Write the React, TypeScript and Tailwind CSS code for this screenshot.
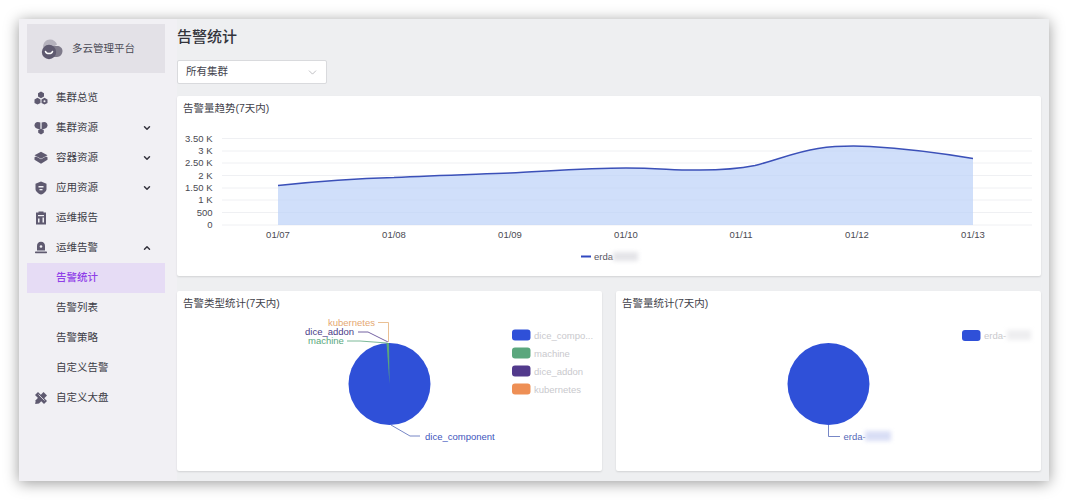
import { ChevronDown, ChevronUp } from 'lucide-react'
import type { ReactNode } from 'react'

const FONT = 'font-["Liberation_Sans","Noto_Sans_CJK_SC",sans-serif]'

const ClusterIcon = () => (
  <svg width="14" height="14" viewBox="0 0 14 14" fill="#5f5a70">
    <path d="M7 .5l3 1.700v3.400L7 7.300 4 5.600V2.200z" />
    <path d="M3.500 6.800l3 1.700v3.400l-3 1.700-3-1.700V8.500z" />
    <path d="M10.500 6.800l3 1.700v3.400l-3 1.700-3-1.700V8.500z" />
    <circle cx="10.500" cy="10.200" r="1" fill="#f1f0f4" />
  </svg>
)

const ResourceIcon = () => (
  <svg width="14" height="14" viewBox="0 0 14 14" fill="#5f5a70">
    <path d="M6.400 1.500L3.800 1C1.800 1 .5 2.500.5 4.200c0 1.800 1.300 3 3 3.600l2.900.7z" />
    <path d="M7.600 1.500l2.600-.5c2 0 3.300 1.500 3.300 3.200 0 1.800-1.300 3-3 3.600l-2.900.7z" />
    <path d="M7 7.800l2.800 1.300v2.700L7 13.500l-2.800-1.700V9.100z" />
  </svg>
)

const LayersIcon = () => (
  <svg width="14" height="14" viewBox="0 0 14 14" fill="#5f5a70">
    <path d="M7 .8l6.500 3.500L7 7.800.5 4.300z" />
    <path d="M.5 6.300l1.600-.8L7 8.200l4.900-2.700 1.600.8v2.400L7 12.800.5 8.700z" />
  </svg>
)

const ShieldIcon = () => (
  <svg width="14" height="14" viewBox="0 0 14 14" fill="#5f5a70">
    <path d="M7 .5l5.500 2.200v5.200c0 2.500-2.700 4.600-5.500 5.600-2.800-1-5.500-3.100-5.500-5.600V2.700z" />
    <rect x="4.500" y="5" width="5" height="1.500" fill="#f1f0f4" />
    <rect x="5.500" y="8" width="3" height="1.300" fill="#f1f0f4" />
  </svg>
)

const ReportIcon = () => (
  <svg width="14" height="14" viewBox="0 0 14 14" fill="#5f5a70">
    <path d="M2 1.500h2.500V.500h5v1H12v12H2z" />
    <rect x="4" y="4" width="6" height="1.200" fill="#f1f0f4" />
    <rect x="4" y="7.500" width="1.500" height="4" fill="#f1f0f4" />
    <rect x="8.500" y="6.500" width="1.500" height="5" fill="#f1f0f4" />
  </svg>
)

const AlarmIcon = () => (
  <svg width="14" height="14" viewBox="0 0 14 14" fill="#5f5a70">
    <path d="M7 .8c2.600 0 4 1.900 4 4.200v4.500H3V5c0-2.300 1.400-4.200 4-4.200z" />
    <circle cx="7" cy="5.500" r="1.300" fill="#f1f0f4" />
    <rect x="1" y="10.500" width="12" height="1.700" rx=".6" />
  </svg>
)

const BoardIcon = () => (
  <svg width="14" height="14" viewBox="0 0 14 14" fill="#5f5a70">
    <path d="M1 4l3-3 9 9-3 3z" />
    <path d="M9.500 1l3.500 3.500-8 8-3.800.6.500-3.800z" />
    <path d="M4.500 3.500l6 6" stroke="#f1f0f4" strokeWidth="0.800" />
  </svg>
)

type MenuItem = { label: string; icon?: ReactNode; arrow?: 'up' | 'down'; active?: boolean }

const menu: MenuItem[] = [
  { label: '集群总览', icon: <ClusterIcon /> },
  { label: '集群资源', icon: <ResourceIcon />, arrow: 'down' },
  { label: '容器资源', icon: <LayersIcon />, arrow: 'down' },
  { label: '应用资源', icon: <ShieldIcon />, arrow: 'down' },
  { label: '运维报告', icon: <ReportIcon /> },
  { label: '运维告警', icon: <AlarmIcon />, arrow: 'up' },
  { label: '告警统计', active: true },
  { label: '告警列表' },
  { label: '告警策略' },
  { label: '自定义告警' },
  { label: '自定义大盘', icon: <BoardIcon /> },
]

const Sidebar = () => (
  <div className="w-[158px] shrink-0 bg-[#f1f0f4] pt-[5px] pl-[8px] pr-[12px]">
    <div className="flex items-center h-[49px] bg-[#e3e1e7] mb-[10px] pl-[14px] gap-[9px]">
      <svg width="22" height="22" viewBox="0 0 22 22">
        <path d="M2 9c0-4 3-7.500 7-7.500 3.500 0 6 2 7 5L6 13z" fill="#b5b2bd" />
        <path d="M16 8c3 0 5.500 2 5.500 5s-2.500 6-5.500 6h-5V8z" fill="#7f7b8b" />
        <circle cx="8" cy="14" r="7.200" fill="#5f5a70" />
        <path d="M4.500 13.500c1 2.800 6 2.800 7 0" fill="none" stroke="#fff" strokeWidth="1.500" strokeLinecap="round" />
      </svg>
      <span className="text-[10.5px] text-[#4a4a55]">多云管理平台</span>
    </div>
    {menu.map((item) => (
      <div
        key={item.label}
        className={`flex items-center h-[30px] ${item.active ? 'bg-[#e6dcf5] text-[#8f3fe8] font-medium' : 'text-[#3c3c46]'}`}
      >
        <span className="flex justify-center w-[29px] pr-[2px]">{item.icon}</span>
        <span className="text-[10.5px] flex-1">{item.label}</span>
        {item.arrow === 'down' && <ChevronDown size={10} strokeWidth={3.5} className="text-[#33323c] mr-[13px]" />}
        {item.arrow === 'up' && <ChevronUp size={10} strokeWidth={3.5} className="text-[#33323c] mr-[13px]" />}
      </div>
    ))}
  </div>
)

const Card = ({ title, children }: { title: string; children: ReactNode }) => (
  <div className="relative h-[180px] bg-white rounded-[2px] shadow-[0_1px_2px_rgba(0,0,0,0.12)]">
    <div className="h-[24px] pl-[6px] pt-[5px] text-[10.5px] leading-[14px] text-[#3f3f4a]">{title}</div>
    {children}
  </div>
)

const yTicks = [
  ['3.50 K', 138.500],
  ['3 K', 151],
  ['2.50 K', 163],
  ['2 K', 175.500],
  ['1.50 K', 188],
  ['1 K', 200],
  ['500', 212.500],
  ['0', 225],
] as const

const xTicks = [
  ['01/07', 278],
  ['01/08', 394],
  ['01/09', 510],
  ['01/10', 626],
  ['01/11', 741],
  ['01/12', 857],
  ['01/13', 973],
] as const

const LINE =
  'M278 185.500C320 181 355 178.500 394 177.500C435 175.500 470 174.500 510 173C550 171 590 168 626 168C660 168 675 170.500 700 170C720 170 735 169.500 755 165.500C775 160.500 795 152 818 148.500C835 146 850 145.500 870 146.500C905 148.500 940 153 973 158.500'

const TrendChart = () => (
  <svg width="864" height="156" viewBox="177 120 864 156" className="block">
    {yTicks.map(([label, y]) => (
      <g key={label}>
        <line x1="222" x2="1032" y1={y} y2={y} stroke="#eff0f3" />
        <text x="212.500" y={y + 3} textAnchor="end" fontSize="9.500" fill="#4a4a52">
          {label}
        </text>
      </g>
    ))}
    <path d={`${LINE}L973 225L278 225Z`} fill="#bcd2f8" fillOpacity="0.7" />
    <path d={LINE} fill="none" stroke="#3b50b8" strokeWidth="1.500" />
    {xTicks.map(([label, x]) => (
      <text key={label} x={x} y="238" textAnchor="middle" fontSize="9.500" fill="#4a4a52">
        {label}
      </text>
    ))}
    <line x1="581" x2="591" y1="256.500" y2="256.500" stroke="#3048c0" strokeWidth="2" />
    <text x="594" y="259.500" fontSize="9.500" fill="#55555f">
      erda
    </text>
    <rect x="613" y="252" width="25" height="9" fill="#e4e4e8" className="blur-[2px]" />
  </svg>
)

const legend = [
  ['dice_compo...', '#2f50d8', 335],
  ['machine', '#5aa77d', 353],
  ['dice_addon', '#523a8c', 371],
  ['kubernetes', '#ee8f55', 389],
] as const

const TypePie = () => (
  <svg width="425" height="156" viewBox="177 315 425 156" className="block">
    <circle cx="389.500" cy="384" r="41" fill="#2f50d8" />
    <path d="M389.500 384L386.500 343.100L389 343Z" fill="#5aa77d" />
    <path d="M378 322.500H388.500V342" fill="none" stroke="#e5b078" strokeWidth="0.800" />
    <path d="M358 332H368L388 342" fill="none" stroke="#523a8c" strokeWidth="0.800" />
    <path d="M347 341H360L387 343" fill="none" stroke="#5aa77d" strokeWidth="0.800" />
    <path d="M391 425L410 436H420" fill="none" stroke="#5468b8" strokeWidth="0.800" />
    <text x="328" y="326" fontSize="9.500" fill="#e5a872">
      kubernetes
    </text>
    <text x="305" y="335" fontSize="9.500" fill="#4b3c88">
      dice_addon
    </text>
    <text x="308" y="344" fontSize="9.500" fill="#5aa77d">
      machine
    </text>
    <text x="425" y="439.500" fontSize="9.500" fill="#3e55bd">
      dice_component
    </text>
    {legend.map(([label, color, y]) => (
      <g key={label}>
        <rect x="512" y={y - 5.500} width="18.500" height="11" rx="3" fill={color} />
        <text x="534" y={y + 3.500} fontSize="9.500" fill="#c9c9cd">
          {label}
        </text>
      </g>
    ))}
  </svg>
)

const VolumePie = () => (
  <svg width="425" height="156" viewBox="616 315 425 156" className="block">
    <circle cx="828.500" cy="384" r="41" fill="#2f50d8" />
    <path d="M828.500 425V436.500H840" fill="none" stroke="#5468b8" strokeWidth="0.800" />
    <text x="843.500" y="439.500" fontSize="9.500" fill="#5468b8">
      erda-
    </text>
    <rect x="865" y="431" width="26" height="10" fill="#d9def5" className="blur-[2px]" />
    <rect x="962" y="330" width="18.500" height="11" rx="3" fill="#2f50d8" />
    <text x="984" y="338.500" fontSize="9.500" fill="#c9c9cd">
      erda-
    </text>
    <rect x="1007" y="330" width="24" height="10" fill="#eeeef0" className="blur-[2px]" />
  </svg>
)

export default function App() {
  return (
    <div className={`w-[1068px] h-[500px] bg-white p-[19px] overflow-hidden ${FONT}`}>
      <div className="flex h-[462px] bg-[#eeeff1] shadow-[0_2px_14px_rgba(0,0,0,0.4)]">
        <Sidebar />
        <main className="flex-1 min-w-0 pt-[8px] pr-[8px]">
          <h1 className="h-[20px] text-[15px] leading-[20px] font-medium text-[#33343c]">告警统计</h1>
          <div className="flex items-center justify-between w-[150px] h-[24px] mt-[13px] mb-[12px] pl-[8px] pr-[7px] bg-white border border-[#d9dadd] rounded-[2px]">
            <span className="text-[10.5px] text-[#44444e]">所有集群</span>
            <ChevronDown size={13} strokeWidth={1} className="text-[#8a8a92]" />
          </div>
          <Card title="告警量趋势(7天内)">
            <TrendChart />
          </Card>
          <div className="grid grid-cols-2 gap-[14px] mt-[15px]">
            <Card title="告警类型统计(7天内)">
              <TypePie />
            </Card>
            <Card title="告警量统计(7天内)">
              <VolumePie />
            </Card>
          </div>
        </main>
      </div>
    </div>
  )
}
